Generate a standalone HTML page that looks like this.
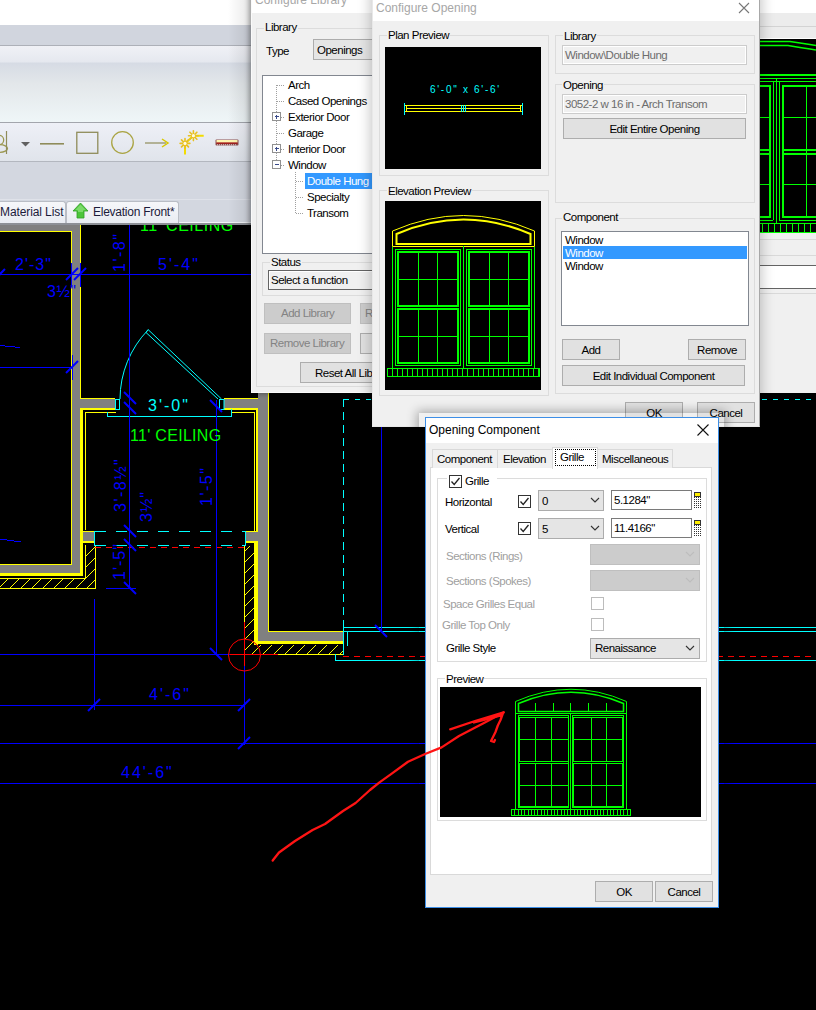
<!DOCTYPE html>
<html><head><meta charset="utf-8">
<style>
*{box-sizing:border-box;margin:0;padding:0}
html,body{width:816px;height:1010px;overflow:hidden;background:#000}
body{position:relative;font-family:"Liberation Sans",sans-serif}
.a{position:absolute}
.t{position:absolute;font-size:11.5px;line-height:13px;letter-spacing:-0.5px;white-space:nowrap;color:#000}
.ttl{position:absolute;font-size:12px;line-height:15px;white-space:nowrap}
.g{position:absolute;border:1px solid #dcdcdc}
.lb{background:#f0f0f0;padding:0 1px}
.btn{position:absolute;background:#e1e1e1;border:1px solid #adadad}
.dis{background:#cccccc;border:1px solid #bfbfbf}
.cmb{position:absolute;background:#e5e5e5;border:1px solid #acacac}
.fld{position:absolute;background:#fff;border:1px solid #7a7a7a}
.ro{position:absolute;background:#f0f0f0;border:1px solid #cccccc;box-shadow:inset 0 0 0 1px #fff}
.cb{position:absolute;width:13px;height:13px;border:1px solid #333;background:#fff}
.cbd{border-color:#bcbcbc}
</style></head><body>

<!-- ===== background app ===== -->
<div class="a" style="left:0;top:0;width:816px;height:25px;background:#fff"></div>
<div class="a" style="left:0;top:25px;width:816px;height:21px;background:#d1d5de;border-bottom:1px solid #adb0b8"></div>
<div class="a" style="left:0;top:46px;width:816px;height:76px;background:linear-gradient(#f0f1f6 0,#e5e8ef 16px,#d6dbe4 17px,#e3e7ea 50%,#eff6f8 100%)"></div>
<div class="a" style="left:0;top:122px;width:816px;height:1px;background:#a3a6ad"></div>
<div class="a" style="left:0;top:123px;width:816px;height:38px;background:linear-gradient(#eef0f7,#e0e4eb)"></div>
<div class="a" style="left:0;top:161px;width:816px;height:1px;background:#b3b7bf"></div>
<div class="a" style="left:0;top:162px;width:816px;height:61px;background:#d3d7e0"></div>
<div class="a" style="left:0;top:199px;width:816px;height:1px;background:#dfe2e9"></div>
<div class="a" style="left:0;top:222px;width:816px;height:3px;background:#8d9096;border-top:1px solid #f3f5f9"></div>

<svg class="a" style="left:0;top:0" width="816" height="1010" viewBox="0 0 816 1010">
<defs><pattern id="hat" width="11" height="11" patternUnits="userSpaceOnUse" patternTransform="translate(1,3)"><line x1="-1" y1="12" x2="12" y2="-1" stroke="#ffff00" stroke-width="1"/></pattern><clipPath id="cadclip"><rect x="0" y="225" width="816" height="785"/></clipPath></defs>
<g clip-path="url(#cadclip)" shape-rendering="crispEdges">
<rect x="0" y="225" width="816" height="785" fill="#000"/>
<rect x="0" y="225" width="72" height="6" fill="#808080"/>
<rect x="72" y="225" width="8" height="348" fill="#808080"/>
<rect x="80" y="399" width="35" height="9" fill="#808080"/>
<rect x="224" y="399" width="34" height="9" fill="#808080"/>
<rect x="258" y="390" width="10" height="251" fill="#808080"/>
<rect x="0" y="565" width="80" height="8" fill="#808080"/>
<rect x="80" y="531" width="14" height="10" fill="#808080"/>
<rect x="245" y="531" width="13" height="10" fill="#808080"/>
<rect x="258" y="632" width="85" height="9" fill="#808080"/>
<path d="M85,546 H95 V588 H0 V578 H85 Z" fill="url(#hat)"/>
<path d="M245,546 H254 V645 H343 V654 H245 Z" fill="url(#hat)"/>
<line x1="0" y1="231.5" x2="72" y2="231.5" stroke="#ffff00" stroke-width="1" />
<line x1="71.5" y1="231" x2="71.5" y2="565" stroke="#ffff00" stroke-width="1" />
<line x1="0" y1="564.5" x2="72" y2="564.5" stroke="#ffff00" stroke-width="1" />
<line x1="80.5" y1="225" x2="80.5" y2="399" stroke="#ffff00" stroke-width="1" />
<line x1="80" y1="398.5" x2="115" y2="398.5" stroke="#ffff00" stroke-width="1" />
<line x1="85.5" y1="412" x2="85.5" y2="530" stroke="#ffff00" stroke-width="1" />
<line x1="85" y1="412.5" x2="116" y2="412.5" stroke="#ffff00" stroke-width="1" />
<line x1="85.5" y1="545" x2="85.5" y2="579" stroke="#ffff00" stroke-width="1" />
<line x1="0" y1="578.5" x2="86" y2="578.5" stroke="#ffff00" stroke-width="1" />
<line x1="81" y1="531.5" x2="94" y2="531.5" stroke="#ffff00" stroke-width="1" />
<line x1="95.5" y1="546" x2="95.5" y2="589" stroke="#ffff00" stroke-width="1" />
<line x1="0" y1="588.5" x2="96" y2="588.5" stroke="#ffff00" stroke-width="1" />
<line x1="224" y1="398.5" x2="258" y2="398.5" stroke="#ffff00" stroke-width="1" />
<line x1="231" y1="412.5" x2="255" y2="412.5" stroke="#ffff00" stroke-width="1" />
<line x1="254.5" y1="412" x2="254.5" y2="531" stroke="#ffff00" stroke-width="1" />
<line x1="268.5" y1="390" x2="268.5" y2="632" stroke="#ffff00" stroke-width="1" />
<line x1="268" y1="631.5" x2="343" y2="631.5" stroke="#ffff00" stroke-width="1" />
<line x1="244.5" y1="546" x2="244.5" y2="655" stroke="#ffff00" stroke-width="1" />
<line x1="244" y1="654.5" x2="343" y2="654.5" stroke="#ffff00" stroke-width="1" />
<line x1="245" y1="531.5" x2="258" y2="531.5" stroke="#ffff00" stroke-width="1" />
<rect x="80" y="408" width="35" height="2" fill="#ffff00"/>
<rect x="80" y="408" width="3" height="168" fill="#ffff00"/>
<rect x="0" y="573" width="83" height="3" fill="#ffff00"/>
<rect x="83" y="541" width="11" height="2" fill="#ffff00"/>
<rect x="224" y="408" width="34" height="2" fill="#ffff00"/>
<rect x="256" y="408" width="2" height="123" fill="#ffff00"/>
<rect x="254" y="541" width="4" height="104" fill="#ffff00"/>
<rect x="254" y="641" width="89" height="3" fill="#ffff00"/>
<rect x="245" y="541" width="13" height="2" fill="#ffff00"/>
</g><g clip-path="url(#cadclip)">
<rect x="115.5" y="399.5" width="4" height="10" fill="none" stroke="#00ffff" stroke-width="1"/>
<rect x="219.5" y="399.5" width="4.5" height="10" fill="none" stroke="#00ffff" stroke-width="1"/>
<path d="M120,399 A100,100 0 0 1 148,330" fill="none" stroke="#00ffff" stroke-width="1"/>
<path d="M146,332.5 L148,329.5 L221.5,399 M146,332.5 L218,399" fill="none" stroke="#00ffff" stroke-width="1"/>
</g><g clip-path="url(#cadclip)" shape-rendering="crispEdges">
<line x1="107" y1="416.5" x2="232" y2="416.5" stroke="#00ffff" stroke-width="1" />
<line x1="107.5" y1="412" x2="107.5" y2="417" stroke="#00ffff" stroke-width="1" />
<line x1="231.5" y1="409" x2="231.5" y2="417" stroke="#00ffff" stroke-width="1" />
<line x1="94.5" y1="531" x2="94.5" y2="546" stroke="#00ffff" stroke-width="1" />
<line x1="245.5" y1="531" x2="245.5" y2="546" stroke="#00ffff" stroke-width="1" />
<line x1="343" y1="627.5" x2="816" y2="627.5" stroke="#00ffff" stroke-width="1" />
<line x1="343" y1="631.5" x2="816" y2="631.5" stroke="#00ffff" stroke-width="1" />
<line x1="347.5" y1="631" x2="347.5" y2="646" stroke="#00ffff" stroke-width="1" />
<line x1="343.5" y1="627" x2="343.5" y2="655" stroke="#00ffff" stroke-width="1" />
<line x1="335" y1="660.5" x2="816" y2="660.5" stroke="#00ffff" stroke-width="1" />
<line x1="335.5" y1="654" x2="335.5" y2="661" stroke="#00ffff" stroke-width="1" />
<line x1="95" y1="531.5" x2="245" y2="531.5" stroke="#00ffff" stroke-width="1" stroke-dasharray="11,10"/>
<line x1="95" y1="545.5" x2="245" y2="545.5" stroke="#00ffff" stroke-width="1" stroke-dasharray="11,10"/>
<line x1="343.5" y1="399" x2="343.5" y2="627" stroke="#00ffff" stroke-width="1" stroke-dasharray="8,5"/>
<line x1="344" y1="399.5" x2="816" y2="399.5" stroke="#00ffff" stroke-width="1" stroke-dasharray="5,6"/>
<line x1="95" y1="547.5" x2="245" y2="547.5" stroke="#ff0000" stroke-width="1" stroke-dasharray="6,5"/>
<line x1="343" y1="656.5" x2="816" y2="656.5" stroke="#ff0000" stroke-width="1" stroke-dasharray="6,5"/>
<line x1="244.5" y1="622" x2="244.5" y2="666" stroke="#ff0000" stroke-width="1" />
<line x1="228" y1="654.5" x2="278" y2="654.5" stroke="#ff0000" stroke-width="1" />
<line x1="0" y1="274.5" x2="816" y2="274.5" stroke="#0000ff" stroke-width="1" />
<line x1="129.5" y1="225" x2="129.5" y2="589" stroke="#0000ff" stroke-width="1" />
<line x1="216.5" y1="400" x2="216.5" y2="655" stroke="#0000ff" stroke-width="1" />
<line x1="94.5" y1="599" x2="94.5" y2="710" stroke="#0000ff" stroke-width="1" />
<line x1="0" y1="654.5" x2="230" y2="654.5" stroke="#0000ff" stroke-width="1" />
<line x1="244.5" y1="666" x2="244.5" y2="745" stroke="#0000ff" stroke-width="1" />
<line x1="0" y1="705.5" x2="245" y2="705.5" stroke="#0000ff" stroke-width="1" />
<line x1="0" y1="743.5" x2="816" y2="743.5" stroke="#0000ff" stroke-width="1" />
<line x1="0" y1="783.5" x2="816" y2="783.5" stroke="#0000ff" stroke-width="1" />
<line x1="106" y1="588.5" x2="136" y2="588.5" stroke="#0000ff" stroke-width="1" />
<line x1="381.5" y1="393" x2="381.5" y2="632" stroke="#0000ff" stroke-width="1" />
<line x1="0" y1="367.5" x2="72" y2="367.5" stroke="#0000ff" stroke-width="1" />
<line x1="72.5" y1="355" x2="72.5" y2="380" stroke="#0000ff" stroke-width="1" />
<line x1="0" y1="345.5" x2="20" y2="347.5" stroke="#0000ff" stroke-width="1" />
<line x1="0" y1="539" x2="21" y2="542" stroke="#0000ff" stroke-width="1" />
</g><g clip-path="url(#cadclip)">
<circle cx="244.5" cy="655" r="16" fill="none" stroke="#ff0000" stroke-width="1"/>
<line x1="-7" y1="281" x2="5" y2="269" stroke="#0000ff" stroke-width="2" />
<line x1="66" y1="280" x2="78" y2="268" stroke="#0000ff" stroke-width="2" />
<line x1="74" y1="280" x2="86" y2="268" stroke="#0000ff" stroke-width="2" />
<line x1="66" y1="373" x2="78" y2="361" stroke="#0000ff" stroke-width="2" />
<line x1="88" y1="711" x2="100" y2="699" stroke="#0000ff" stroke-width="2" />
<line x1="238" y1="711" x2="250" y2="699" stroke="#0000ff" stroke-width="2" />
<line x1="238" y1="749" x2="250" y2="737" stroke="#0000ff" stroke-width="2" />
<line x1="210" y1="648" x2="222" y2="660" stroke="#0000ff" stroke-width="2" />
<line x1="375" y1="625" x2="387" y2="637" stroke="#0000ff" stroke-width="2" />
<line x1="124" y1="392" x2="136" y2="404" stroke="#0000ff" stroke-width="2" />
<line x1="124" y1="402" x2="136" y2="414" stroke="#0000ff" stroke-width="2" />
<line x1="124" y1="525" x2="136" y2="537" stroke="#0000ff" stroke-width="2" />
<line x1="124" y1="539" x2="136" y2="551" stroke="#0000ff" stroke-width="2" />
<line x1="124" y1="582" x2="136" y2="594" stroke="#0000ff" stroke-width="2" />
<line x1="210" y1="400" x2="222" y2="412" stroke="#0000ff" stroke-width="2" />
<text x="15" y="270" font-family="Liberation Sans"  font-size="16" fill="#0000ff" text-anchor="start" letter-spacing="1">2'-3"</text>
<text x="47" y="297" font-family="Liberation Sans"  font-size="16" fill="#0000ff" text-anchor="start" letter-spacing="0.5">3&#189;"</text>
<text x="158" y="270" font-family="Liberation Sans"  font-size="16" fill="#0000ff" text-anchor="start" letter-spacing="2">5'-4"</text>
<text x="125" y="272" font-family="Liberation Sans"  font-size="16" fill="#0000ff" text-anchor="start" transform="rotate(-90 125 272)" letter-spacing="1.5">1'-8"</text>
<text x="148" y="411" font-family="Liberation Sans"  font-size="16" fill="#00ffff" text-anchor="start" letter-spacing="2">3'-0"</text>
<text x="130" y="441" font-family="Liberation Sans"  font-size="16" fill="#00ff00" text-anchor="start" letter-spacing="0.3">11' CEILING</text>
<text x="140" y="231" font-family="Liberation Sans"  font-size="16" fill="#00ff00" text-anchor="start" letter-spacing="0.5">11' CEILING</text>
<text x="126" y="512" font-family="Liberation Sans"  font-size="16" fill="#0000ff" text-anchor="start" transform="rotate(-90 126 512)" letter-spacing="1.5">3'-8&#189;"</text>
<text x="152" y="522" font-family="Liberation Sans"  font-size="16" fill="#0000ff" text-anchor="start" transform="rotate(-90 152 522)" letter-spacing="1">3&#189;"</text>
<text x="212" y="506" font-family="Liberation Sans"  font-size="16" fill="#0000ff" text-anchor="start" transform="rotate(-90 212 506)" letter-spacing="1.5">1'-5"</text>
<text x="125" y="580" font-family="Liberation Sans"  font-size="16" fill="#0000ff" text-anchor="start" transform="rotate(-90 125 580)" letter-spacing="1">1'-5"</text>
<text x="149" y="700" font-family="Liberation Sans"  font-size="16" fill="#0000ff" text-anchor="start" letter-spacing="2">4'-6"</text>
<text x="121" y="778" font-family="Liberation Sans"  font-size="16" fill="#0000ff" text-anchor="start" letter-spacing="2">44'-6"</text>
<line x1="71.5" y1="263" x2="71.5" y2="287" stroke="#0000ff" stroke-width="1" />
<line x1="80.5" y1="263" x2="80.5" y2="287" stroke="#0000ff" stroke-width="1" />
</g></svg>

<!-- toolbar icons -->
<svg class="a" style="left:0;top:122px" width="250" height="40">
<circle cx="-1" cy="18" r="4.7" fill="none" stroke="#9c9850" stroke-width="1.3"/><ellipse cx="0" cy="26.5" rx="7.5" ry="3.8" fill="none" stroke="#9c9850" stroke-width="1.3"/><line x1="6.5" y1="9" x2="6.5" y2="32" stroke="#8f8c5a" stroke-width="1.2"/>
<path d="M21,20 H30 L25.5,24.5 Z" fill="#606060"/>
<line x1="40" y1="21.8" x2="64" y2="21.8" stroke="#8f8c5a" stroke-width="1.6"/>
<rect x="76.8" y="10.3" width="21" height="21" fill="none" stroke="#8f8c5a" stroke-width="1.3"/>
<circle cx="122.5" cy="20.5" r="10.8" fill="none" stroke="#aaa444" stroke-width="1.3"/>
<line x1="145" y1="21" x2="166" y2="21" stroke="#8f8c5a" stroke-width="1.2"/>
<path d="M162,17 L168,21 L162,25" fill="none" stroke="#d8c800" stroke-width="1.5"/>
<path d="M185,32.5 V21.4 L193.4,13.7 H203.7" fill="none" stroke="#f2dc00" stroke-width="2"/>
<g stroke="#e8c020" stroke-width="1.6" stroke-linecap="round"><path d="M185,16.5 V26.3 M180.1,21.4 H189.9 M181.5,17.9 L188.5,24.9 M188.5,17.9 L181.5,24.9"/><path d="M193.4,8.8 V18.6 M188.5,13.7 H198.3 M189.9,10.2 L196.9,17.2 M196.9,10.2 L189.9,17.2"/></g>
<circle cx="185" cy="21.4" r="1.6" fill="#fffbe0"/><circle cx="193.4" cy="13.7" r="1.6" fill="#fffbe0"/>
<rect x="215.5" y="17.5" width="23" height="6" fill="#8c5050" rx="1"/>
<rect x="216.5" y="18" width="21" height="2.6" fill="#fff6b0"/>
<rect x="216.5" y="20.6" width="21" height="1" fill="#b00000"/>
<line x1="217" y1="22.8" x2="237" y2="22.8" stroke="#e8e0e0" stroke-width="0.9" stroke-dasharray="1,1"/>
</svg>
<!-- tabs -->
<div class="a" style="left:-5px;top:201px;width:71px;height:22px;background:linear-gradient(#f6f7fa,#e9ecf2);border:1px solid #b9bdc5;border-bottom:none;border-radius:3px 3px 0 0"></div>
<div class="a" style="left:0;top:205px;font-size:12px;line-height:14px;color:#1b1b3a;white-space:nowrap;letter-spacing:-0.1px">Material List</div>
<div class="a" style="left:66px;top:201px;width:113px;height:22px;background:linear-gradient(#f6f7fa,#e9ecf2);border:1px solid #b9bdc5;border-bottom:none;border-radius:3px 3px 0 0"></div>
<svg class="a" style="left:72px;top:202px" width="18" height="18"><path d="M8.5,1 L16,9 H12 V16 H5 V9 H1 Z" fill="#4cc53a" stroke="#2f9e25" stroke-width="0.8"/><path d="M8.5,2.5 L14,8.3 H11 V10 H6 V8.3 H3 Z" fill="#9be88a" opacity="0.6"/></svg>
<div class="a" style="left:93px;top:205px;font-size:12px;line-height:14px;color:#1b1b3a;white-space:nowrap;letter-spacing:-0.25px">Elevation Front*</div>

<!-- right background panel -->
<div class="a" style="left:740px;top:13px;width:76px;height:380px;background:#ececec"></div>
<div class="a" style="left:740px;top:26px;width:76px;height:1px;background:#d3d3d3"></div>
<div class="a" style="left:740px;top:38px;width:76px;height:1px;background:#fff"></div>
<div class="a" style="left:740px;top:39px;width:76px;height:194px;background:#000"></div>
<div class="a" style="left:740px;top:233px;width:76px;height:160px;background:#f0f0f0"></div>
<div class="a" style="left:740px;top:239px;width:76px;height:1px;background:#d9d9d9"></div>
<div class="a" style="left:740px;top:255px;width:76px;height:1px;background:#d9d9d9"></div>
<div class="a" style="left:740px;top:265px;width:76px;height:24px;background:#fff;border-top:1px solid #646464;border-bottom:1px solid #646464"></div>
<div class="a" style="left:740px;top:293px;width:76px;height:1px;background:#d9d9d9"></div>
<svg class="a" style="left:0;top:0" width="816" height="240" shape-rendering="crispEdges">
<path d="M740,41.5 H790 L800,43 L810,44.5 L816,45.5 M740,45.5 H788 L800,47.5 L810,49 L816,50" fill="none" stroke="#00ff00" stroke-width="1.5" shape-rendering="auto"/>
<rect x="740" y="74" width="76" height="2" fill="#00ff00"/>
<line x1="740" y1="78.5" x2="816" y2="78.5" stroke="#00ff00" stroke-width="1" />
<line x1="740" y1="81.5" x2="816" y2="81.5" stroke="#00ff00" stroke-width="1" />
<line x1="776.5" y1="78" x2="776.5" y2="223" stroke="#00ff00" stroke-width="1" />
<line x1="773.5" y1="81" x2="773.5" y2="220" stroke="#00ff00" stroke-width="1" />
<line x1="779.5" y1="81" x2="779.5" y2="220" stroke="#00ff00" stroke-width="1" />
<rect x="769" y="85" width="2" height="132" fill="#00ff00"/>
<rect x="782" y="85" width="2" height="132" fill="#00ff00"/>
<rect x="740" y="85" width="31" height="2" fill="#00ff00"/>
<rect x="782" y="85" width="34" height="2" fill="#00ff00"/>
<rect x="740" y="148.5" width="31" height="2" fill="#00ff00"/>
<rect x="782" y="148.5" width="34" height="2" fill="#00ff00"/>
<rect x="740" y="152.5" width="31" height="2" fill="#00ff00"/>
<rect x="782" y="152.5" width="34" height="2" fill="#00ff00"/>
<rect x="740" y="216" width="31" height="2" fill="#00ff00"/>
<rect x="782" y="216" width="34" height="2" fill="#00ff00"/>
<line x1="740" y1="117.5" x2="770" y2="117.5" stroke="#00ff00" stroke-width="1" />
<line x1="783" y1="117.5" x2="816" y2="117.5" stroke="#00ff00" stroke-width="1" />
<line x1="740" y1="184.5" x2="770" y2="184.5" stroke="#00ff00" stroke-width="1" />
<line x1="783" y1="184.5" x2="816" y2="184.5" stroke="#00ff00" stroke-width="1" />
<line x1="806.5" y1="85" x2="806.5" y2="217" stroke="#00ff00" stroke-width="1" />
<line x1="740" y1="220.5" x2="773" y2="220.5" stroke="#00ff00" stroke-width="1" />
<line x1="779" y1="220.5" x2="816" y2="220.5" stroke="#00ff00" stroke-width="1" />
<line x1="740" y1="223.5" x2="816" y2="223.5" stroke="#00ff00" stroke-width="1" />
<line x1="740" y1="232" x2="816" y2="232" stroke="#00ff00" stroke-width="1" />
<line x1="744.5" y1="223" x2="744.5" y2="232" stroke="#00ff00" stroke-width="1" />
<line x1="750.5" y1="223" x2="750.5" y2="232" stroke="#00ff00" stroke-width="1" />
<line x1="756.5" y1="223" x2="756.5" y2="232" stroke="#00ff00" stroke-width="1" />
<line x1="762.5" y1="223" x2="762.5" y2="232" stroke="#00ff00" stroke-width="1" />
<line x1="768.5" y1="223" x2="768.5" y2="232" stroke="#00ff00" stroke-width="1" />
<line x1="774.5" y1="223" x2="774.5" y2="232" stroke="#00ff00" stroke-width="1" />
<line x1="780.5" y1="223" x2="780.5" y2="232" stroke="#00ff00" stroke-width="1" />
<line x1="786.5" y1="223" x2="786.5" y2="232" stroke="#00ff00" stroke-width="1" />
<line x1="792.5" y1="223" x2="792.5" y2="232" stroke="#00ff00" stroke-width="1" />
<line x1="798.5" y1="223" x2="798.5" y2="232" stroke="#00ff00" stroke-width="1" />
<line x1="804.5" y1="223" x2="804.5" y2="232" stroke="#00ff00" stroke-width="1" />
<line x1="810.5" y1="223" x2="810.5" y2="232" stroke="#00ff00" stroke-width="1" />
</svg>


<!-- ===== Configure Library (behind) ===== -->
<div class="a" style="left:228px;top:0;width:24px;height:225px;background:linear-gradient(90deg,rgba(0,0,0,0),rgba(0,0,0,0.10))"></div>
<div class="a" style="left:251px;top:-20px;width:140px;height:413px;background:#f0f0f0;border:1px solid #fafafa;border-top:none;box-shadow:-2px 1px 5px rgba(0,0,0,0.35)"></div>
<div class="a" style="left:252px;top:0;width:130px;height:13px;background:#fff"></div>
<div class="ttl" style="left:255px;top:-7px;color:#a7a7a7">Configure Library</div>
<div class="g" style="left:256px;top:28px;width:140px;height:359px"></div>
<div class="t lb" style="left:264px;top:21px">Library</div>
<div class="t" style="left:266px;top:45px">Type</div>
<div class="cmb" style="left:313px;top:39px;width:80px;height:21px"></div>
<div class="t" style="left:317px;top:44px">Openings</div>
<div class="a" style="left:262px;top:75px;width:130px;height:179px;background:#fff;border:1px solid #828790"></div>
<div class="a" style="left:305px;top:173px;width:80px;height:16px;background:#3399ff"></div>
<svg class="a" style="left:0;top:0" width="400" height="260" shape-rendering="crispEdges"><line x1="276.5" y1="85" x2="276.5" y2="165" stroke="#a0a0a0" stroke-width="1" stroke-dasharray="1,1"/><line x1="295.5" y1="172" x2="295.5" y2="213" stroke="#a0a0a0" stroke-width="1" stroke-dasharray="1,1"/><line x1="277" y1="85.5" x2="285" y2="85.5" stroke="#a0a0a0" stroke-width="1" stroke-dasharray="1,1"/><line x1="277" y1="101.5" x2="285" y2="101.5" stroke="#a0a0a0" stroke-width="1" stroke-dasharray="1,1"/><line x1="277" y1="117.5" x2="285" y2="117.5" stroke="#a0a0a0" stroke-width="1" stroke-dasharray="1,1"/><rect x="272.5" y="112.5" width="8" height="8" fill="#fff" stroke="#919191"/><line x1="274.5" y1="116.5" x2="279" y2="116.5" stroke="#3a4a8a"/><line x1="276.5" y1="114.5" x2="276.5" y2="119" stroke="#3a4a8a"/><line x1="277" y1="133.5" x2="285" y2="133.5" stroke="#a0a0a0" stroke-width="1" stroke-dasharray="1,1"/><line x1="277" y1="149.5" x2="285" y2="149.5" stroke="#a0a0a0" stroke-width="1" stroke-dasharray="1,1"/><rect x="272.5" y="144.5" width="8" height="8" fill="#fff" stroke="#919191"/><line x1="274.5" y1="148.5" x2="279" y2="148.5" stroke="#3a4a8a"/><line x1="276.5" y1="146.5" x2="276.5" y2="151" stroke="#3a4a8a"/><line x1="277" y1="165.5" x2="285" y2="165.5" stroke="#a0a0a0" stroke-width="1" stroke-dasharray="1,1"/><rect x="272.5" y="160.5" width="8" height="8" fill="#fff" stroke="#919191"/><line x1="274.5" y1="164.5" x2="279" y2="164.5" stroke="#3a4a8a"/><line x1="296" y1="181.5" x2="304" y2="181.5" stroke="#a0a0a0" stroke-width="1" stroke-dasharray="1,1"/><line x1="296" y1="197.5" x2="304" y2="197.5" stroke="#a0a0a0" stroke-width="1" stroke-dasharray="1,1"/><line x1="296" y1="213.5" x2="304" y2="213.5" stroke="#a0a0a0" stroke-width="1" stroke-dasharray="1,1"/></svg>
<div class="t" style="left:288px;top:79px;color:#000">Arch</div>
<div class="t" style="left:288px;top:95px;color:#000">Cased Openings</div>
<div class="t" style="left:288px;top:111px;color:#000">Exterior Door</div>
<div class="t" style="left:288px;top:127px;color:#000">Garage</div>
<div class="t" style="left:288px;top:143px;color:#000">Interior Door</div>
<div class="t" style="left:288px;top:159px;color:#000">Window</div>
<div class="t" style="left:307px;top:175px;color:#fff">Double Hung</div>
<div class="t" style="left:307px;top:191px;color:#000">Specialty</div>
<div class="t" style="left:307px;top:207px;color:#000">Transom</div>
<div class="g" style="left:262px;top:262px;width:130px;height:34px"></div>
<div class="t lb" style="left:270px;top:256px">Status</div>
<div class="a" style="left:268px;top:270px;width:120px;height:20px;background:#f0f0f0;border:1px solid #646464;box-shadow:inset 1px 1px 0 #fff"></div>
<div class="t" style="left:271px;top:274px">Select a function</div>
<div class="btn dis" style="left:264px;top:303px;width:87px;height:21px"></div>
<div class="t" style="left:281px;top:307px;color:#838383">Add Library</div>
<div class="btn dis" style="left:360px;top:303px;width:40px;height:21px"></div>
<div class="t" style="left:365px;top:307px;color:#838383">R</div>
<div class="btn dis" style="left:264px;top:333px;width:87px;height:21px"></div>
<div class="t" style="left:270px;top:337px;color:#838383">Remove Library</div>
<div class="btn" style="left:360px;top:333px;width:40px;height:21px"></div>
<div class="btn" style="left:300px;top:362px;width:100px;height:21px"></div>
<div class="t" style="left:315px;top:367px">Reset All Libraries</div>



<!-- ===== Configure Opening ===== -->
<div class="a" style="left:372px;top:-9px;width:388px;height:436px;box-shadow:0 0 12px 2px rgba(0,0,0,0.22)"></div>
<div class="a" style="left:372px;top:-9px;width:388px;height:436px;background:#f0f0f0;border:1px solid #e8e8e8;border-right-color:#a8a8a8"></div>
<div class="a" style="left:373px;top:0;width:386px;height:21px;background:#fff"></div>
<div class="ttl" style="left:376px;top:1px;color:#a7a7a7">Configure Opening</div>
<svg class="a" style="left:737px;top:1px" width="14" height="14"><path d="M2,2 L12,12 M12,2 L2,12" stroke="#777" stroke-width="1.1"/></svg>
<div class="g" style="left:379px;top:35px;width:170px;height:141px"></div>
<div class="t lb" style="left:387px;top:29px">Plan Preview</div>
<div class="g" style="left:379px;top:190px;width:170px;height:206px"></div>
<div class="t lb" style="left:387px;top:185px">Elevation Preview</div>
<div class="a" style="left:385px;top:47px;width:156px;height:122px;background:#000"></div>
<svg class="a" style="left:0;top:0" width="816" height="430" shape-rendering="crispEdges">
<rect x="404.5" y="105.5" width="118" height="6" fill="none" stroke="#ffff00" stroke-width="1"/>
<line x1="406.5" y1="108.5" x2="520.5" y2="108.5" stroke="#ffff00" stroke-width="1" />
<line x1="406.5" y1="106" x2="406.5" y2="111" stroke="#ffff00" stroke-width="1" />
<line x1="520.5" y1="106" x2="520.5" y2="111" stroke="#ffff00" stroke-width="1" />
<line x1="404.5" y1="103" x2="404.5" y2="115" stroke="#00ffff" stroke-width="1" />
<line x1="522.5" y1="103" x2="522.5" y2="115" stroke="#00ffff" stroke-width="1" />
<line x1="461.5" y1="105" x2="461.5" y2="112" stroke="#00ffff" stroke-width="1" />
<line x1="463.5" y1="105" x2="463.5" y2="112" stroke="#00ffff" stroke-width="1" />
<line x1="465.5" y1="105" x2="465.5" y2="112" stroke="#00ffff" stroke-width="1" />
</svg>
<div class="a" style="left:430px;top:84px;width:80px;font:10px/12px 'Liberation Sans';color:#00ffff;letter-spacing:1.7px;white-space:nowrap">6'-0" x 6'-6'</div>
<div class="a" style="left:385px;top:201px;width:156px;height:189px;background:#000"></div>
<svg class="a" style="left:0;top:0" width="816" height="430">
<path d="M392.5,246.5 V231 Q463.5,200 534.5,231 V246.5 Z" fill="none" stroke="#ffff00" stroke-width="1"/>
<path d="M396.5,244 V234 Q463.5,205 530.5,234 V244 Z" fill="none" stroke="#ffff00" stroke-width="2"/>
<g shape-rendering="crispEdges">
<line x1="392.5" y1="247" x2="392.5" y2="369" stroke="#00ff00" stroke-width="1" />
<line x1="534.5" y1="247" x2="534.5" y2="369" stroke="#00ff00" stroke-width="1" />
<line x1="395.5" y1="249" x2="395.5" y2="366" stroke="#00ff00" stroke-width="1" />
<line x1="531.5" y1="249" x2="531.5" y2="366" stroke="#00ff00" stroke-width="1" />
<line x1="395.5" y1="249.5" x2="460.5" y2="249.5" stroke="#00ff00" stroke-width="1" />
<line x1="466.5" y1="249.5" x2="531.5" y2="249.5" stroke="#00ff00" stroke-width="1" />
<line x1="395.5" y1="365.5" x2="460.5" y2="365.5" stroke="#00ff00" stroke-width="1" />
<line x1="466.5" y1="365.5" x2="531.5" y2="365.5" stroke="#00ff00" stroke-width="1" />
<line x1="460.5" y1="249" x2="460.5" y2="366" stroke="#00ff00" stroke-width="1" />
<line x1="466.5" y1="249" x2="466.5" y2="366" stroke="#00ff00" stroke-width="1" />
<line x1="463.5" y1="246" x2="463.5" y2="369" stroke="#00ff00" stroke-width="1" />
<rect x="397.5" y="251.5" width="61" height="55.0" fill="none" stroke="#00ff00" stroke-width="1"/>
<rect x="398.5" y="252.5" width="59" height="53.0" fill="none" stroke="#00ff00" stroke-width="1"/>
<line x1="418.5" y1="252.5" x2="418.5" y2="305.5" stroke="#00ff00" stroke-width="1" />
<line x1="437.5" y1="252.5" x2="437.5" y2="305.5" stroke="#00ff00" stroke-width="1" />
<line x1="398.5" y1="279.5" x2="457.5" y2="279.5" stroke="#00ff00" stroke-width="1" />
<rect x="397.5" y="308.5" width="61" height="55.0" fill="none" stroke="#00ff00" stroke-width="1"/>
<rect x="398.5" y="309.5" width="59" height="53.0" fill="none" stroke="#00ff00" stroke-width="1"/>
<line x1="418.5" y1="309.5" x2="418.5" y2="362.5" stroke="#00ff00" stroke-width="1" />
<line x1="437.5" y1="309.5" x2="437.5" y2="362.5" stroke="#00ff00" stroke-width="1" />
<line x1="398.5" y1="336.5" x2="457.5" y2="336.5" stroke="#00ff00" stroke-width="1" />
<rect x="468.5" y="251.5" width="61" height="55.0" fill="none" stroke="#00ff00" stroke-width="1"/>
<rect x="469.5" y="252.5" width="59" height="53.0" fill="none" stroke="#00ff00" stroke-width="1"/>
<line x1="489.5" y1="252.5" x2="489.5" y2="305.5" stroke="#00ff00" stroke-width="1" />
<line x1="508.5" y1="252.5" x2="508.5" y2="305.5" stroke="#00ff00" stroke-width="1" />
<line x1="469.5" y1="279.5" x2="528.5" y2="279.5" stroke="#00ff00" stroke-width="1" />
<rect x="468.5" y="308.5" width="61" height="55.0" fill="none" stroke="#00ff00" stroke-width="1"/>
<rect x="469.5" y="309.5" width="59" height="53.0" fill="none" stroke="#00ff00" stroke-width="1"/>
<line x1="489.5" y1="309.5" x2="489.5" y2="362.5" stroke="#00ff00" stroke-width="1" />
<line x1="508.5" y1="309.5" x2="508.5" y2="362.5" stroke="#00ff00" stroke-width="1" />
<line x1="469.5" y1="336.5" x2="528.5" y2="336.5" stroke="#00ff00" stroke-width="1" />
<rect x="387.5" y="368.5" width="152" height="8" fill="none" stroke="#00ff00" stroke-width="1"/>
<line x1="387.5" y1="368.5" x2="387.5" y2="376.5" stroke="#00ff00" stroke-width="1" />
<line x1="392.53" y1="368.5" x2="392.53" y2="376.5" stroke="#00ff00" stroke-width="1" />
<line x1="397.55999999999995" y1="368.5" x2="397.55999999999995" y2="376.5" stroke="#00ff00" stroke-width="1" />
<line x1="402.5899999999999" y1="368.5" x2="402.5899999999999" y2="376.5" stroke="#00ff00" stroke-width="1" />
<line x1="407.6199999999999" y1="368.5" x2="407.6199999999999" y2="376.5" stroke="#00ff00" stroke-width="1" />
<line x1="412.64999999999986" y1="368.5" x2="412.64999999999986" y2="376.5" stroke="#00ff00" stroke-width="1" />
<line x1="417.67999999999984" y1="368.5" x2="417.67999999999984" y2="376.5" stroke="#00ff00" stroke-width="1" />
<line x1="422.7099999999998" y1="368.5" x2="422.7099999999998" y2="376.5" stroke="#00ff00" stroke-width="1" />
<line x1="427.7399999999998" y1="368.5" x2="427.7399999999998" y2="376.5" stroke="#00ff00" stroke-width="1" />
<line x1="432.76999999999975" y1="368.5" x2="432.76999999999975" y2="376.5" stroke="#00ff00" stroke-width="1" />
<line x1="437.7999999999997" y1="368.5" x2="437.7999999999997" y2="376.5" stroke="#00ff00" stroke-width="1" />
<line x1="442.8299999999997" y1="368.5" x2="442.8299999999997" y2="376.5" stroke="#00ff00" stroke-width="1" />
<line x1="447.8599999999997" y1="368.5" x2="447.8599999999997" y2="376.5" stroke="#00ff00" stroke-width="1" />
<line x1="452.88999999999965" y1="368.5" x2="452.88999999999965" y2="376.5" stroke="#00ff00" stroke-width="1" />
<line x1="457.9199999999996" y1="368.5" x2="457.9199999999996" y2="376.5" stroke="#00ff00" stroke-width="1" />
<line x1="462.9499999999996" y1="368.5" x2="462.9499999999996" y2="376.5" stroke="#00ff00" stroke-width="1" />
<line x1="467.97999999999956" y1="368.5" x2="467.97999999999956" y2="376.5" stroke="#00ff00" stroke-width="1" />
<line x1="473.00999999999954" y1="368.5" x2="473.00999999999954" y2="376.5" stroke="#00ff00" stroke-width="1" />
<line x1="478.0399999999995" y1="368.5" x2="478.0399999999995" y2="376.5" stroke="#00ff00" stroke-width="1" />
<line x1="483.0699999999995" y1="368.5" x2="483.0699999999995" y2="376.5" stroke="#00ff00" stroke-width="1" />
<line x1="488.09999999999945" y1="368.5" x2="488.09999999999945" y2="376.5" stroke="#00ff00" stroke-width="1" />
<line x1="493.1299999999994" y1="368.5" x2="493.1299999999994" y2="376.5" stroke="#00ff00" stroke-width="1" />
<line x1="498.1599999999994" y1="368.5" x2="498.1599999999994" y2="376.5" stroke="#00ff00" stroke-width="1" />
<line x1="503.1899999999994" y1="368.5" x2="503.1899999999994" y2="376.5" stroke="#00ff00" stroke-width="1" />
<line x1="508.21999999999935" y1="368.5" x2="508.21999999999935" y2="376.5" stroke="#00ff00" stroke-width="1" />
<line x1="513.2499999999993" y1="368.5" x2="513.2499999999993" y2="376.5" stroke="#00ff00" stroke-width="1" />
<line x1="518.2799999999993" y1="368.5" x2="518.2799999999993" y2="376.5" stroke="#00ff00" stroke-width="1" />
<line x1="523.3099999999993" y1="368.5" x2="523.3099999999993" y2="376.5" stroke="#00ff00" stroke-width="1" />
<line x1="528.3399999999992" y1="368.5" x2="528.3399999999992" y2="376.5" stroke="#00ff00" stroke-width="1" />
<line x1="533.3699999999992" y1="368.5" x2="533.3699999999992" y2="376.5" stroke="#00ff00" stroke-width="1" />
<line x1="538.3999999999992" y1="368.5" x2="538.3999999999992" y2="376.5" stroke="#00ff00" stroke-width="1" />
</g></svg>
<div class="g" style="left:555px;top:35px;width:200px;height:39px"></div>
<div class="t lb" style="left:563px;top:30px">Library</div>
<div class="ro" style="left:562px;top:45px;width:185px;height:20px"></div>
<div class="t" style="left:565px;top:49px;color:#6d6d6d">Window\Double Hung</div>
<div class="g" style="left:555px;top:84px;width:200px;height:119px"></div>
<div class="t lb" style="left:562px;top:79px">Opening</div>
<div class="ro" style="left:562px;top:94px;width:185px;height:20px"></div>
<div class="t" style="left:565px;top:98px;color:#6d6d6d">3052-2 w 16 in - Arch Transom</div>
<div class="btn" style="left:563px;top:118px;width:183px;height:21px"></div>
<div class="t" style="left:563px;top:123px;width:183px;text-align:center">Edit Entire Opening</div>
<div class="g" style="left:555px;top:218px;width:200px;height:176px"></div>
<div class="t lb" style="left:562px;top:211px">Component</div>
<div class="a" style="left:561px;top:231px;width:188px;height:95px;background:#fff;border:1px solid #828790"></div>
<div class="a" style="left:563px;top:246px;width:184px;height:13px;background:#3399ff"></div>
<div class="t" style="left:565px;top:234px">Window</div>
<div class="t" style="left:565px;top:247px;color:#fff">Window</div>
<div class="t" style="left:565px;top:260px">Window</div>
<div class="btn" style="left:562px;top:339px;width:58px;height:21px"></div>
<div class="t" style="left:562px;top:344px;width:58px;text-align:center">Add</div>
<div class="btn" style="left:688px;top:339px;width:58px;height:21px"></div>
<div class="t" style="left:688px;top:344px;width:58px;text-align:center">Remove</div>
<div class="btn" style="left:562px;top:365px;width:183px;height:21px"></div>
<div class="t" style="left:562px;top:370px;width:183px;text-align:center">Edit Individual Component</div>
<div class="btn" style="left:625px;top:402px;width:58px;height:21px"></div>
<div class="t" style="left:625px;top:407px;width:58px;text-align:center">OK</div>
<div class="btn" style="left:697px;top:402px;width:58px;height:21px"></div>
<div class="t" style="left:697px;top:407px;width:58px;text-align:center">Cancel</div>

<!-- ===== Opening Component ===== -->
<div class="a" style="left:419px;top:413px;width:305px;height:500px;box-shadow:0 0 10px 2px rgba(0,0,0,0.3)"></div>
<div class="a" style="left:425px;top:417px;width:294px;height:491px;background:#f0f0f0;border:1px solid #3d8ee6"></div>
<div class="a" style="left:426px;top:418px;width:292px;height:25px;background:#fff"></div>
<div class="ttl" style="left:429px;top:423px;color:#000">Opening Component</div>
<svg class="a" style="left:696px;top:423px" width="14" height="14"><path d="M1.5,1.5 L12.5,12.5 M12.5,1.5 L1.5,12.5" stroke="#111" stroke-width="1.1"/></svg>
<div class="a" style="left:430px;top:467px;width:282px;height:408px;background:#fff;border:1px solid #d9d9d9"></div>
<div class="a" style="left:432px;top:449px;width:66px;height:19px;background:#f0f0f0;border:1px solid #d9d9d9;border-bottom:none"></div>
<div class="t" style="left:437px;top:453px">Component</div>
<div class="a" style="left:497px;top:449px;width:56px;height:19px;background:#f0f0f0;border:1px solid #d9d9d9;border-bottom:none"></div>
<div class="t" style="left:503px;top:453px">Elevation</div>
<div class="a" style="left:597px;top:449px;width:76px;height:19px;background:#f0f0f0;border:1px solid #d9d9d9;border-bottom:none"></div>
<div class="t" style="left:602px;top:453px">Miscellaneous</div>
<div class="a" style="left:552px;top:447px;width:46px;height:22px;background:#fff;border:1px solid #d9d9d9;border-bottom:none"></div>
<div class="a" style="left:555px;top:449px;width:41px;height:17px;border:1px dotted #000"></div>
<div class="t" style="left:560px;top:451px">Grille</div>

<div class="a" style="left:437px;top:478px;width:270px;height:184px;border:1px solid #dcdcdc"></div>
<div class="a" style="left:447px;top:473px;width:50px;height:16px;background:#fff"></div>
<div class="cb" style="left:449px;top:475px"></div>
<div class="t" style="left:465px;top:475px">Grille</div>
<div class="t" style="left:445px;top:496px">Horizontal</div>
<div class="cb" style="left:518px;top:495px"></div>
<div class="cmb" style="left:538px;top:490px;width:66px;height:21px"></div>
<div class="t" style="left:542px;top:495px">0</div>
<div class="fld" style="left:611px;top:490px;width:81px;height:20px"></div>
<div class="t" style="left:614px;top:494px">5.1284"</div>
<div class="t" style="left:445px;top:523px">Vertical</div>
<div class="cb" style="left:518px;top:522px"></div>
<div class="cmb" style="left:538px;top:518px;width:66px;height:21px"></div>
<div class="t" style="left:542px;top:523px">5</div>
<div class="fld" style="left:611px;top:518px;width:81px;height:20px"></div>
<div class="t" style="left:614px;top:522px">11.4166"</div>
<div class="t" style="left:446px;top:550px;color:#a0a0a0">Sections (Rings)</div>
<div class="cmb" style="left:590px;top:544px;width:110px;height:21px;background:#cccccc;border-color:#bfbfbf"></div>
<div class="t" style="left:446px;top:575px;color:#a0a0a0">Sections (Spokes)</div>
<div class="cmb" style="left:590px;top:570px;width:110px;height:21px;background:#cccccc;border-color:#bfbfbf"></div>
<div class="t" style="left:443px;top:598px;color:#a0a0a0">Space Grilles Equal</div>
<div class="cb cbd" style="left:591px;top:597px"></div>
<div class="t" style="left:442px;top:619px;color:#a0a0a0">Grille Top Only</div>
<div class="cb cbd" style="left:591px;top:618px"></div>
<div class="t" style="left:446px;top:642px">Grille Style</div>
<div class="cmb" style="left:590px;top:638px;width:110px;height:21px"></div>
<div class="t" style="left:595px;top:642px">Renaissance</div>
<svg class="a" style="left:0;top:0" width="816" height="910">
<path d="M451.5,481.5 L454.2,484.5 L459.5,478" fill="none" stroke="#222" stroke-width="1.3"/>
<path d="M520.5,501.5 L523.2,504.5 L528.5,498" fill="none" stroke="#222" stroke-width="1.3"/>
<path d="M520.5,528.5 L523.2,531.5 L528.5,525" fill="none" stroke="#222" stroke-width="1.3"/>
<path d="M591,498 L595,502 L599,498" fill="none" stroke="#333" stroke-width="1.1"/>
<path d="M591,526 L595,530 L599,526" fill="none" stroke="#333" stroke-width="1.1"/>
<path d="M686,552 L690,556 L694,552" fill="none" stroke="#bdbdbd" stroke-width="1.1"/>
<path d="M686,578 L690,582 L694,578" fill="none" stroke="#bdbdbd" stroke-width="1.1"/>
<path d="M686,646 L690,650 L694,646" fill="none" stroke="#333" stroke-width="1.1"/>
<rect x="694" y="492" width="7" height="17" fill="#fff"/>
<rect x="694.5" y="492.5" width="6" height="4" fill="#ffee00" stroke="#333" stroke-width="1"/>
<line x1="694" y1="497.5" x2="701" y2="497.5" stroke="#333" stroke-width="1" stroke-dasharray="1,1"/>
<line x1="694" y1="499.5" x2="701" y2="499.5" stroke="#333" stroke-width="1" stroke-dasharray="1,1"/>
<line x1="694" y1="501.5" x2="701" y2="501.5" stroke="#333" stroke-width="1" stroke-dasharray="1,1"/>
<line x1="694" y1="503.5" x2="701" y2="503.5" stroke="#333" stroke-width="1" stroke-dasharray="1,1"/>
<line x1="694" y1="505.5" x2="701" y2="505.5" stroke="#333" stroke-width="1" stroke-dasharray="1,1"/>
<line x1="694" y1="507.5" x2="701" y2="507.5" stroke="#333" stroke-width="1" stroke-dasharray="1,1"/>
<rect x="694" y="520" width="7" height="17" fill="#fff"/>
<rect x="694.5" y="520.5" width="6" height="4" fill="#ffee00" stroke="#333" stroke-width="1"/>
<line x1="694" y1="525.5" x2="701" y2="525.5" stroke="#333" stroke-width="1" stroke-dasharray="1,1"/>
<line x1="694" y1="527.5" x2="701" y2="527.5" stroke="#333" stroke-width="1" stroke-dasharray="1,1"/>
<line x1="694" y1="529.5" x2="701" y2="529.5" stroke="#333" stroke-width="1" stroke-dasharray="1,1"/>
<line x1="694" y1="531.5" x2="701" y2="531.5" stroke="#333" stroke-width="1" stroke-dasharray="1,1"/>
<line x1="694" y1="533.5" x2="701" y2="533.5" stroke="#333" stroke-width="1" stroke-dasharray="1,1"/>
<line x1="694" y1="535.5" x2="701" y2="535.5" stroke="#333" stroke-width="1" stroke-dasharray="1,1"/>
</svg>
<div class="a" style="left:437px;top:678px;width:270px;height:143px;border:1px solid #dcdcdc"></div>
<div class="t" style="left:445px;top:673px;background:#fff;padding:0 1px">Preview</div>
<div class="a" style="left:440px;top:687px;width:261px;height:130px;background:#000"></div>
<svg class="a" style="left:0;top:0" width="816" height="830">
<path d="M515.5,713.5 V701.5 Q571,677 626.5,701.5 V713.5 Z" fill="none" stroke="#00ff00" stroke-width="1"/>
<path d="M518.5,711.5 V703.5 Q571,681 623.5,703.5 V711.5 Z" fill="none" stroke="#00ff00" stroke-width="1.6"/>
<g shape-rendering="crispEdges">
<line x1="535.5" y1="703" x2="535.5" y2="711" stroke="#00ff00" stroke-width="1" />
<line x1="553.5" y1="703" x2="553.5" y2="711" stroke="#00ff00" stroke-width="1" />
<line x1="570.5" y1="703" x2="570.5" y2="711" stroke="#00ff00" stroke-width="1" />
<line x1="588.5" y1="703" x2="588.5" y2="711" stroke="#00ff00" stroke-width="1" />
<line x1="606.5" y1="703" x2="606.5" y2="711" stroke="#00ff00" stroke-width="1" />
<rect x="515.5" y="713.5" width="111" height="96" fill="none" stroke="#00ff00" stroke-width="1"/>
<rect x="518.5" y="715.5" width="50" height="92" fill="none" stroke="#00ff00" stroke-width="1"/>
<rect x="572.5" y="715.5" width="51" height="92" fill="none" stroke="#00ff00" stroke-width="1"/>
<line x1="570.5" y1="714" x2="570.5" y2="809" stroke="#00ff00" stroke-width="1" />
<rect x="519.5" y="717.5" width="49" height="44.0" fill="none" stroke="#00ff00" stroke-width="1.5"/>
<line x1="535.5" y1="717.5" x2="535.5" y2="761.5" stroke="#00ff00" stroke-width="1" />
<line x1="551.5" y1="717.5" x2="551.5" y2="761.5" stroke="#00ff00" stroke-width="1" />
<line x1="519" y1="739.5" x2="569" y2="739.5" stroke="#00ff00" stroke-width="1" />
<rect x="519.5" y="763.5" width="49" height="43.0" fill="none" stroke="#00ff00" stroke-width="1.5"/>
<line x1="535.5" y1="763.5" x2="535.5" y2="806.5" stroke="#00ff00" stroke-width="1" />
<line x1="551.5" y1="763.5" x2="551.5" y2="806.5" stroke="#00ff00" stroke-width="1" />
<line x1="519" y1="785.5" x2="569" y2="785.5" stroke="#00ff00" stroke-width="1" />
<rect x="573.5" y="717.5" width="49" height="44.0" fill="none" stroke="#00ff00" stroke-width="1.5"/>
<line x1="591.5" y1="717.5" x2="591.5" y2="761.5" stroke="#00ff00" stroke-width="1" />
<line x1="606.5" y1="717.5" x2="606.5" y2="761.5" stroke="#00ff00" stroke-width="1" />
<line x1="573" y1="739.5" x2="623" y2="739.5" stroke="#00ff00" stroke-width="1" />
<rect x="573.5" y="763.5" width="49" height="43.0" fill="none" stroke="#00ff00" stroke-width="1.5"/>
<line x1="591.5" y1="763.5" x2="591.5" y2="806.5" stroke="#00ff00" stroke-width="1" />
<line x1="606.5" y1="763.5" x2="606.5" y2="806.5" stroke="#00ff00" stroke-width="1" />
<line x1="573" y1="785.5" x2="623" y2="785.5" stroke="#00ff00" stroke-width="1" />
<rect x="511.5" y="809.5" width="119" height="6" fill="none" stroke="#00ff00" stroke-width="1"/>
<line x1="511.5" y1="809.5" x2="511.5" y2="815.5" stroke="#00ff00" stroke-width="1" />
<line x1="514.8" y1="809.5" x2="514.8" y2="815.5" stroke="#00ff00" stroke-width="1" />
<line x1="518.0999999999999" y1="809.5" x2="518.0999999999999" y2="815.5" stroke="#00ff00" stroke-width="1" />
<line x1="521.3999999999999" y1="809.5" x2="521.3999999999999" y2="815.5" stroke="#00ff00" stroke-width="1" />
<line x1="524.6999999999998" y1="809.5" x2="524.6999999999998" y2="815.5" stroke="#00ff00" stroke-width="1" />
<line x1="527.9999999999998" y1="809.5" x2="527.9999999999998" y2="815.5" stroke="#00ff00" stroke-width="1" />
<line x1="531.2999999999997" y1="809.5" x2="531.2999999999997" y2="815.5" stroke="#00ff00" stroke-width="1" />
<line x1="534.5999999999997" y1="809.5" x2="534.5999999999997" y2="815.5" stroke="#00ff00" stroke-width="1" />
<line x1="537.8999999999996" y1="809.5" x2="537.8999999999996" y2="815.5" stroke="#00ff00" stroke-width="1" />
<line x1="541.1999999999996" y1="809.5" x2="541.1999999999996" y2="815.5" stroke="#00ff00" stroke-width="1" />
<line x1="544.4999999999995" y1="809.5" x2="544.4999999999995" y2="815.5" stroke="#00ff00" stroke-width="1" />
<line x1="547.7999999999995" y1="809.5" x2="547.7999999999995" y2="815.5" stroke="#00ff00" stroke-width="1" />
<line x1="551.0999999999995" y1="809.5" x2="551.0999999999995" y2="815.5" stroke="#00ff00" stroke-width="1" />
<line x1="554.3999999999994" y1="809.5" x2="554.3999999999994" y2="815.5" stroke="#00ff00" stroke-width="1" />
<line x1="557.6999999999994" y1="809.5" x2="557.6999999999994" y2="815.5" stroke="#00ff00" stroke-width="1" />
<line x1="560.9999999999993" y1="809.5" x2="560.9999999999993" y2="815.5" stroke="#00ff00" stroke-width="1" />
<line x1="564.2999999999993" y1="809.5" x2="564.2999999999993" y2="815.5" stroke="#00ff00" stroke-width="1" />
<line x1="567.5999999999992" y1="809.5" x2="567.5999999999992" y2="815.5" stroke="#00ff00" stroke-width="1" />
<line x1="570.8999999999992" y1="809.5" x2="570.8999999999992" y2="815.5" stroke="#00ff00" stroke-width="1" />
<line x1="574.1999999999991" y1="809.5" x2="574.1999999999991" y2="815.5" stroke="#00ff00" stroke-width="1" />
<line x1="577.4999999999991" y1="809.5" x2="577.4999999999991" y2="815.5" stroke="#00ff00" stroke-width="1" />
<line x1="580.799999999999" y1="809.5" x2="580.799999999999" y2="815.5" stroke="#00ff00" stroke-width="1" />
<line x1="584.099999999999" y1="809.5" x2="584.099999999999" y2="815.5" stroke="#00ff00" stroke-width="1" />
<line x1="587.399999999999" y1="809.5" x2="587.399999999999" y2="815.5" stroke="#00ff00" stroke-width="1" />
<line x1="590.6999999999989" y1="809.5" x2="590.6999999999989" y2="815.5" stroke="#00ff00" stroke-width="1" />
<line x1="593.9999999999989" y1="809.5" x2="593.9999999999989" y2="815.5" stroke="#00ff00" stroke-width="1" />
<line x1="597.2999999999988" y1="809.5" x2="597.2999999999988" y2="815.5" stroke="#00ff00" stroke-width="1" />
<line x1="600.5999999999988" y1="809.5" x2="600.5999999999988" y2="815.5" stroke="#00ff00" stroke-width="1" />
<line x1="603.8999999999987" y1="809.5" x2="603.8999999999987" y2="815.5" stroke="#00ff00" stroke-width="1" />
<line x1="607.1999999999987" y1="809.5" x2="607.1999999999987" y2="815.5" stroke="#00ff00" stroke-width="1" />
<line x1="610.4999999999986" y1="809.5" x2="610.4999999999986" y2="815.5" stroke="#00ff00" stroke-width="1" />
<line x1="613.7999999999986" y1="809.5" x2="613.7999999999986" y2="815.5" stroke="#00ff00" stroke-width="1" />
<line x1="617.0999999999985" y1="809.5" x2="617.0999999999985" y2="815.5" stroke="#00ff00" stroke-width="1" />
<line x1="620.3999999999985" y1="809.5" x2="620.3999999999985" y2="815.5" stroke="#00ff00" stroke-width="1" />
<line x1="623.6999999999985" y1="809.5" x2="623.6999999999985" y2="815.5" stroke="#00ff00" stroke-width="1" />
<line x1="626.9999999999984" y1="809.5" x2="626.9999999999984" y2="815.5" stroke="#00ff00" stroke-width="1" />
</g></svg>
<div class="btn" style="left:595px;top:881px;width:58px;height:21px"></div>
<div class="t" style="left:595px;top:886px;width:58px;text-align:center">OK</div>
<div class="btn" style="left:655px;top:881px;width:58px;height:21px"></div>
<div class="t" style="left:655px;top:886px;width:58px;text-align:center">Cancel</div>
<svg class="a" style="left:0;top:0" width="816" height="1010"><path d="M272.7,860.5 L279,852.5 L295,841 L312.6,830 L325,824 L343,811 L355.6,803 L370,790 L379.5,782.4 L390.7,774.4 L408,761.7 L425.7,753.7 L441.6,747.4 L459,736 L483,723.5 L503.5,712.5" fill="none" stroke="#ff1414" stroke-width="2.3" stroke-linejoin="round" stroke-linecap="round"/><path d="M450.2,729.4 L475,721 L503.7,712.3 L499,716 L486,719.5 L474,722.5 M503,713 L500.5,720 L497.8,725.5 L495.5,732 L493.4,736.3 L491,741 L494,742 L495,740" fill="none" stroke="#ff1414" stroke-width="2.3" stroke-linejoin="round" stroke-linecap="round"/></svg>

</body></html>
